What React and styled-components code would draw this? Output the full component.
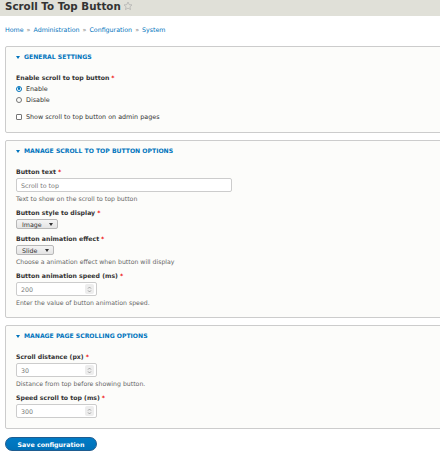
import React from 'react'
import styled, { createGlobalStyle } from 'styled-components'

const GlobalStyle = createGlobalStyle`
  html, body {
    margin: 0;
    padding: 0;
    background: #fff;
  }
  body {
    width: 440px;
    height: 475px;
    overflow: hidden;
    font-family: "DejaVu Sans", sans-serif;
    color: #333;
  }
`

const Header = styled.header`
  height: 16px;
  background: #e0e0d8;
  display: flex;
  align-items: flex-start;
  gap: 2px;
  padding-left: 5px;
  overflow: hidden;
`

const Title = styled.h1`
  margin: 0;
  font-size: 10.3px;
  line-height: 12px;
  font-weight: bold;
  color: #333;
`

const Star = styled.svg`
  width: 10px;
  height: 10px;
  margin-top: 1px;
`

const Main = styled.main`
  padding: 0 0 0 5px;
  margin-right: -6px;
`

const Breadcrumb = styled.nav`
  margin: 10px 0 12px;
  font-size: 6.3px;
  line-height: 8px;
  color: #0074bd;
  span {
    margin: 0 3px;
    color: #777;
  }
`

const Fieldset = styled.section`
  margin-top: ${(p) => p.$top || 0}px;
  padding: 0 0 10px 10px;
  background: #fcfcfa;
  border: 1px solid #ccc;
  border-radius: 2px;
`

const Legend = styled.div`
  display: flex;
  align-items: center;
  gap: 4px;
  padding-top: 6px;
  line-height: 8px;
  font-size: 6.1px;
  font-weight: bold;
  text-transform: uppercase;
  color: #0074bd;
`

const Items = styled.div`
  margin-top: 13px;
  display: flex;
  flex-direction: column;
  gap: 6px;
`

const Item = styled.div`
  display: flex;
  flex-direction: column;
  align-items: flex-start;
`

const Label = styled.div`
  font-size: 6.2px;
  line-height: 8px;
  font-weight: bold;
  color: #333;
`

const Req = styled.span`
  color: #e00;
  margin-left: 2px;
`

const Choice = styled.div`
  display: flex;
  align-items: center;
  gap: 4px;
  height: 11px;
  margin-top: ${(p) => p.$top || 0}px;
  font-size: 6.4px;
  color: #333;
`

const Radio = styled.span`
  width: 6px;
  height: 6px;
  box-sizing: border-box;
  border-radius: 50%;
  border: 1px solid ${(p) => (p.$on ? '#0074bd' : '#767676')};
  display: flex;
  align-items: center;
  justify-content: center;
  &::after {
    content: '';
    width: 2.4px;
    height: 2.4px;
    border-radius: 50%;
    background: ${(p) => (p.$on ? '#0074bd' : 'transparent')};
  }
`

const Check = styled.span`
  width: 6px;
  height: 6px;
  box-sizing: border-box;
  border: 1px solid #767676;
  border-radius: 1px;
  background: #fff;
`

const TextInput = styled.div`
  margin-top: 2px;
  box-sizing: border-box;
  width: ${(p) => p.$w}px;
  height: 14px;
  border: 1px solid #ccc;
  border-radius: 2px;
  background: #fff;
  display: flex;
  align-items: center;
  justify-content: space-between;
  padding: 0 2px 0 4px;
  font-size: 6.3px;
  color: #777;
`

const Spinner = styled.span`
  width: 9px;
  height: 10px;
  border-radius: 2px;
  background: #ededed;
  display: flex;
  align-items: center;
  justify-content: center;
`

const Select = styled.div`
  margin-top: 2px;
  box-sizing: border-box;
  width: ${(p) => p.$w}px;
  height: 10px;
  border: 1px solid #b8b8b8;
  border-radius: 2px;
  background: linear-gradient(#f4f4f4, #e4e4e4);
  display: flex;
  align-items: center;
  justify-content: space-between;
  padding: 0 4px 0 5px;
  font-size: 6.3px;
  color: #333;
`

const Description = styled.div`
  margin-top: 3px;
  font-size: 6.2px;
  line-height: 8px;
  color: #666;
`

const SaveButton = styled.button`
  margin: 8px 0 0 5px;
  height: 14px;
  width: 92px;
  padding: 0;
  border: 1px solid #1e5c90;
  border-radius: 20px;
  background: linear-gradient(#007bc6, #0071b8);
  color: #fff;
  font-family: "DejaVu Sans", sans-serif;
  font-size: 6.3px;
  font-weight: bold;
  display: block;
`

const Caret = () => (
  <svg width="4" height="3" viewBox="0 0 4 3">
    <path d="M0 0h4L2 3z" fill="#333" />
  </svg>
)

const Arrow = () => (
  <svg width="4" height="3" viewBox="0 0 4 3">
    <path d="M0 0h4L2 3z" fill="#0074bd" />
  </svg>
)

const Updown = () => (
  <svg width="5" height="7" viewBox="0 0 5 7">
    <path d="M1 2.6L2.5 1 4 2.6M1 4.4L2.5 6 4 4.4" fill="none" stroke="#888" strokeWidth="0.7" />
  </svg>
)

const Field = ({ label, children, desc }) => (
  <Item>
    <Label>{label}<Req>*</Req></Label>
    {children}
    {desc && <Description>{desc}</Description>}
  </Item>
)

const NumberInput = ({ value }) => (
  <TextInput $w={81}>
    {value}
    <Spinner><Updown /></Spinner>
  </TextInput>
)

const App = () => {
  return <>
    <GlobalStyle />
    <Header>
      <Title>Scroll To Top Button</Title>
      <Star viewBox="0 0 24 24">
        <path
          d="M12 2.5l2.9 6.2 6.6.7-4.9 4.5 1.4 6.6L12 17.1l-6 3.4 1.4-6.6-4.9-4.5 6.6-.7z"
          fill="none"
          stroke="#aaa"
          strokeWidth="1.6"
          strokeLinejoin="round"
        />
      </Star>
    </Header>
    <Main>
      <Breadcrumb>
        Home<span>»</span>Administration<span>»</span>Configuration<span>»</span>System
      </Breadcrumb>

      <Fieldset>
        <Legend><Arrow />General settings</Legend>
        <Items>
          <Item>
            <Label>Enable scroll to top button<Req>*</Req></Label>
            <Choice $top={1}><Radio $on />Enable</Choice>
            <Choice><Radio />Disable</Choice>
            <Choice $top={6}><Check />Show scroll to top button on admin pages</Choice>
          </Item>
        </Items>
      </Fieldset>

      <Fieldset $top={7}>
        <Legend><Arrow />Manage scroll to top button options</Legend>
        <Items>
          <Field label="Button text" desc="Text to show on the scroll to top button">
            <TextInput $w={216}>Scroll to top</TextInput>
          </Field>
          <Field label="Button style to display">
            <Select $w={42}>Image<Caret /></Select>
          </Field>
          <Field label="Button animation effect" desc="Choose a animation effect when button will display">
            <Select $w={38}>Slide<Caret /></Select>
          </Field>
          <Field label="Button animation speed (ms)" desc="Enter the value of button animation speed.">
            <NumberInput value="200" />
          </Field>
        </Items>
      </Fieldset>

      <Fieldset $top={7}>
        <Legend><Arrow />Manage page scrolling options</Legend>
        <Items>
          <Field label="Scroll distance (px)" desc="Distance from top before showing button.">
            <NumberInput value="30" />
          </Field>
          <Field label="Speed scroll to top (ms)">
            <NumberInput value="300" />
          </Field>
        </Items>
      </Fieldset>
    </Main>
    <SaveButton type="button">Save configuration</SaveButton>
  </>
}

export default App
